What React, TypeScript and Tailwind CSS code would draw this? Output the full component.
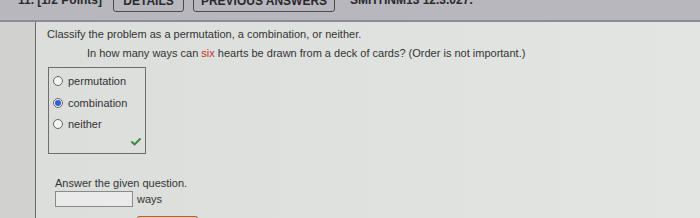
import { Check } from 'lucide-react'

const options = [
  { id: 'perm', label: 'permutation', checked: false },
  { id: 'comb', label: 'combination', checked: true },
  { id: 'none', label: 'neither', checked: false },
]

function Radio({ checked }: { checked: boolean }) {
  return (
    <span className="flex h-[10px] w-[10px] shrink-0 items-center justify-center rounded-full border border-[#666] bg-[#f2f3f2]">
      {checked && <span className="h-[6px] w-[6px] rounded-full bg-[#2f5fd6]" />}
    </span>
  )
}

export default function App() {
  return (
    <div className="flex h-[218px] w-[700px] flex-col overflow-hidden bg-[#dcdedc] font-['Liberation_Sans',Arial,sans-serif] text-[#333]">
      {/* Top bar, its upper half is out of the photo */}
      <header className="h-[22px] shrink-0 overflow-hidden border-b-2 border-[#8d8c92] bg-[#b8b7bd]">
        <div className="-mt-[6px] flex items-start whitespace-nowrap text-[12px] font-bold leading-[12px] text-[#2a2a2e]">
          <span className="ml-[18px] w-[77px]">11. [1/2 Points]</span>
          <span className="ml-[18px] flex h-[18px] w-[71px] justify-center rounded-b-[3px] border border-[#4a4a50]">DETAILS</span>
          <span className="ml-[9px] flex h-[18px] w-[142px] justify-center rounded-b-[3px] border border-[#4a4a50]">PREVIOUS ANSWERS</span>
          <span className="ml-[15px]">SMITHNM13 12.3.027.</span>
        </div>
      </header>

      <div className="flex flex-1">
        <div className="w-[36px] shrink-0 border-r border-[#6b6b6b] bg-[#d1d2d0]" />

        <main className="flex-1 bg-gradient-to-r from-[#dcdedc] to-[#e3e5e3] pl-[11px] pt-[5px] text-[11px] leading-[14px]">
          <p>Classify the problem as a permutation, a combination, or neither.</p>
          <p className="mt-[5px] pl-[40px]">
            In how many ways can <span className="text-[#c8302a]">six</span> hearts be drawn from a deck of cards? (Order is not important.)
          </p>

          <div className="relative ml-[1px] mt-[7px] h-[87px] w-[98px] border border-[#6e6e6e] pl-[4px] pt-[6px]">
            <div className="flex flex-col gap-[7.5px]">
              {options.map(o => (
                <label key={o.id} className="flex items-center gap-[5px]">
                  <Radio checked={o.checked} />
                  <span>{o.label}</span>
                </label>
              ))}
            </div>
            <Check className="absolute bottom-[5px] right-[3px] h-[12px] w-[12px] text-[#3c8c3c]" strokeWidth={4} />
          </div>

          <p className="ml-[8px] mt-[22px]">Answer the given question.</p>
          <div className="ml-[8px] mt-[1px] flex items-center gap-[4px]">
            <div className="h-[16px] w-[78px] border border-[#8a8a8a] bg-[#e9eae9]" />
            <span>ways</span>
          </div>
          <div className="ml-[90px] mt-[9px] h-[20px] w-[61px] rounded-t-[2px] border border-[#b5643a] bg-[#f2c9a8]" />
        </main>
      </div>
    </div>
  )
}
